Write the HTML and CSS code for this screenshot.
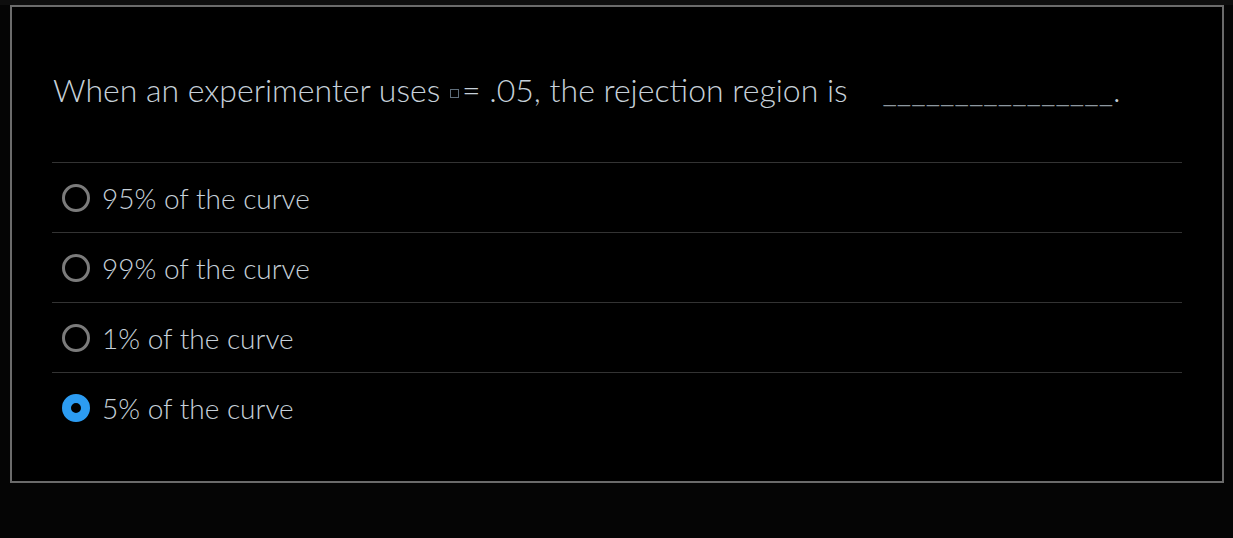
FILE: index.html
```html
<!DOCTYPE html>
<html>
<head>
<meta charset="utf-8">
<link rel="stylesheet" href="styles.css">
</head>
<body>
<div class="page">
  <div class="card">
    <div class="question">When an experimenter uses <span class="missing"></span>= .05, the rejection region is <span class="blank">________________</span>.</div>
    <ul class="answers">
      <li class="answer"><span class="radio"></span><span class="label">95% of the curve</span></li>
      <li class="answer"><span class="radio"></span><span class="label">99% of the curve</span></li>
      <li class="answer"><span class="radio"></span><span class="label">1% of the curve</span></li>
      <li class="answer"><span class="radio checked"></span><span class="label">5% of the curve</span></li>
    </ul>
  </div>
</div>
</body>
</html>
```
FILE: styles.css
```css
html, body {
  margin: 0;
  padding: 0;
  background: #050505;
}
.page {
  width: 1233px;
  height: 538px;
  padding-top: 5px;
  box-sizing: border-box;
  background-color: #050505;
  background-image: linear-gradient(#0e0e0e, #0e0e0e);
  background-size: 100% 5px;
  background-repeat: no-repeat;
}
.card {
  margin-left: 10px;
  width: 1214px;
  height: 478px;
  box-sizing: border-box;
  border: 2px solid #6b6b6b;
  background: #000;
  padding: 0 40px 0 40px;
  font-family: Lato, "Open Sans", sans-serif;
  font-weight: 300;
  color: #c6d0d9;
}
.question {
  font-size: 32px;
  padding-top: 62px;
  height: 93px;
  line-height: 42px;
  padding-left: 1px;
  white-space: nowrap;
}
.missing {
  display: inline-block;
  width: 7px;
  height: 7px;
  border: 1.5px solid #5f6e7b;
  margin: 0 3px 0 1px;
  vertical-align: 4px;
}
.blank {
  margin-left: 26px;
  color: #8d979f;
}
.answers {
  list-style: none;
  margin: 0;
  padding: 0;
}
.answer {
  display: flex;
  align-items: center;
  height: 70px;
  border-top: 1px solid #333;
  box-sizing: border-box;
  font-size: 28px;
}
.radio {
  width: 22px;
  height: 22px;
  border: 3px solid #7b7b7b;
  border-radius: 50%;
  margin-left: 10px;
  margin-right: 12px;
  flex: none;
}
.radio.checked {
  width: 10px;
  height: 10px;
  border: 9px solid #2c9cf2;
  background: #000;
}
.label {
  display: block;
}
```
